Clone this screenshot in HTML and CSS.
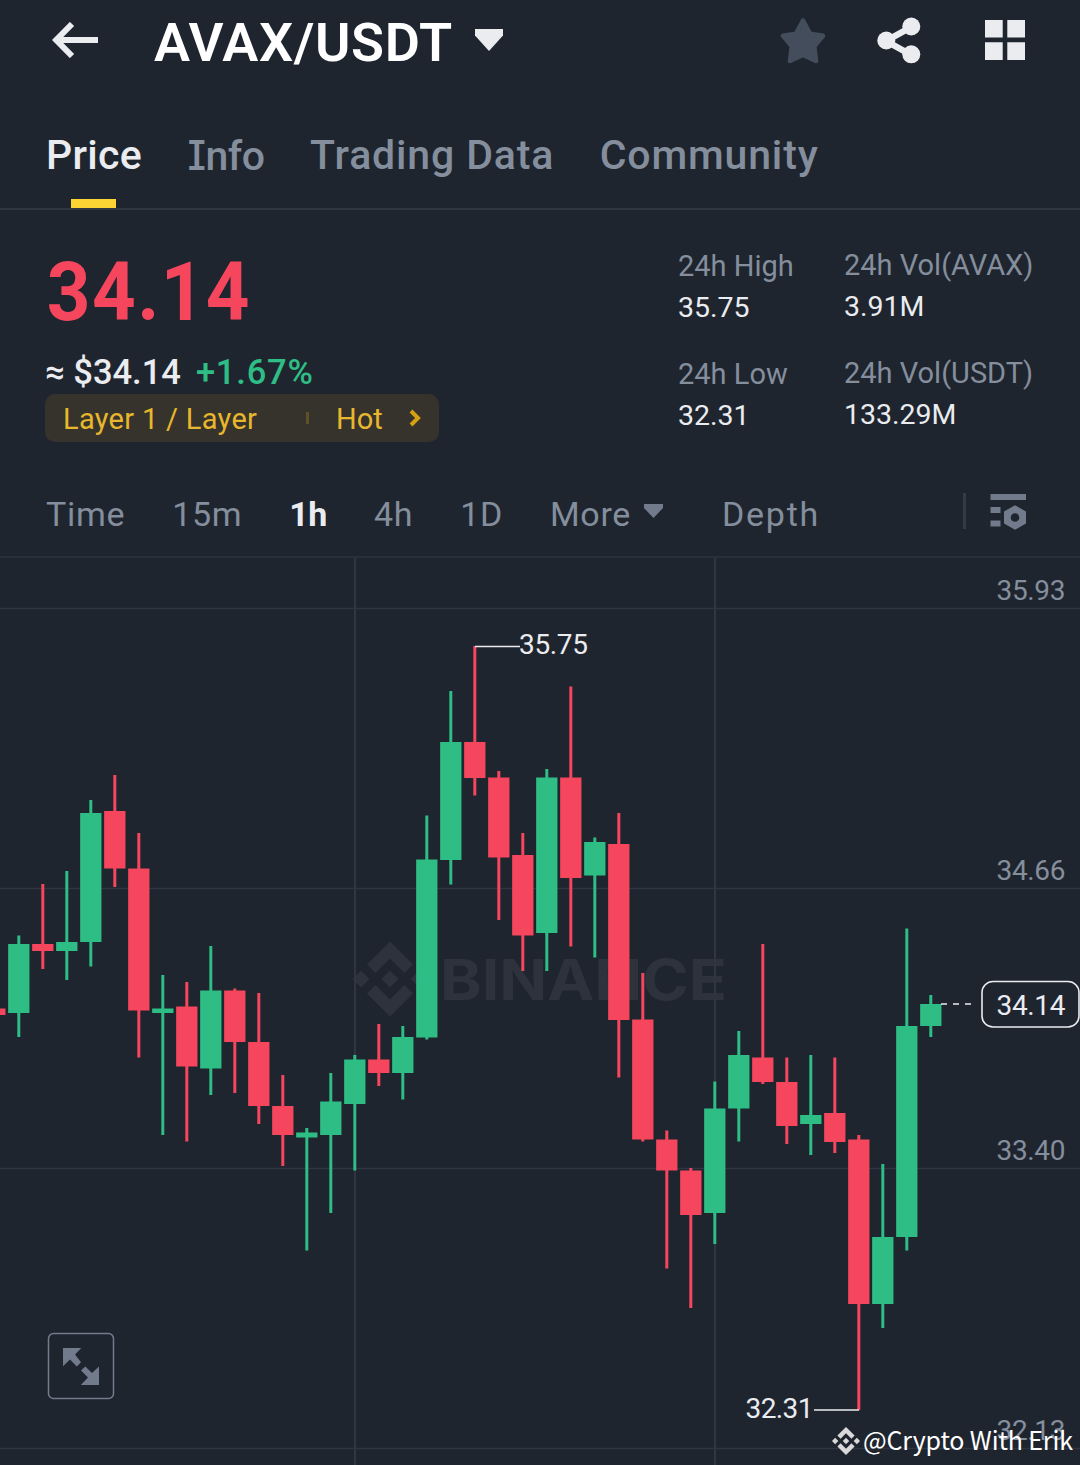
FILE: index.html
```html
<!DOCTYPE html>
<html lang="en">
<head>
<meta charset="utf-8">
<title>AVAX/USDT</title>
<link rel="stylesheet" href="styles.css">
</head>
<body>
<svg class="defs" width="0" height="0">
  <symbol id="brand" viewBox="0 0 126.61 126.61">
    <path d="M38.73 53.2l24.59-24.58 24.6 24.6 14.3-14.31L63.32 0l-38.9 38.9zM0 63.31L14.3 49l14.31 14.31-14.31 14.3zM38.73 73.41L63.32 98l24.6-24.6 14.31 14.29-38.91 38.91-38.91-38.88zM98 63.31L112.3 49l14.31 14.3-14.31 14.32zM77.83 63.3L63.32 48.78 48.81 63.28 63.32 77.8z"/>
  </symbol>
</svg>
<div class="screen">
  <header class="header">
    <svg class="back" width="46" height="36" viewBox="0 0 46 36"><path d="M20 2L4.200 18L20 34M4.200 18H46" fill="none" stroke="#eaecef" stroke-width="6"/></svg>
    <h1 class="pair">AVAX/USDT</h1>
    <svg class="pair-caret" width="28" height="22" viewBox="0 0 28 22"><path d="M0 0H28V6.500L14 22L0 6.500Z" fill="#eaecef"/></svg>
    <div class="actions">
      <svg width="46" height="48" viewBox="0 0 46 48"><path d="M23 3.500L30.100 16.800L43 18.800L34.300 29.200L36 44L23 38L10 44L11.700 29.200L3 18.800L15.900 16.800Z" fill="#444d5b" stroke="#444d5b" stroke-width="4.500" stroke-linejoin="round"/></svg>
      <svg class="share" width="44" height="48" viewBox="0 0 44 48"><path d="M34.300 10L9 24L34.300 38" fill="none" stroke="#eaecef" stroke-width="6.500"/><g fill="#eaecef"><circle cx="9.300" cy="23.500" r="9"/><circle cx="34.300" cy="9.500" r="9"/><circle cx="34.300" cy="37.300" r="9"/></g></svg>
      <svg class="apps" width="40" height="40" viewBox="0 0 40 40"><path d="M0 0H17.700V17.500H0ZM22.300 0H40V17.500H22.300ZM0 22.300H17.700V40H0ZM22.300 22.300H40V40H22.300Z" fill="#eaecef"/></svg>
    </div>
  </header>

  <nav class="tabs">
    <a class="tab tab-active">Price</a>
    <a class="tab tab-info"><span class="serif-i">I</span>nfo</a>
    <a class="tab">Trading Data</a>
    <a class="tab">Community</a>
  </nav>

  <section class="summary">
    <div class="quote">
      <div class="last">34.14</div>
      <div class="fiat"><span class="approx">≈ $34.14</span><span class="change">+1.67%</span></div>
      <div class="tags">
        <span class="tag-name">Layer 1 / Layer</span><i class="tag-sep"></i><span class="tag-hot">Hot</span>
        <svg width="12" height="18" viewBox="0 0 12 18"><path d="M2 2L9 9L2 16" fill="none" stroke="#d6a012" stroke-width="4"/></svg>
      </div>
    </div>
    <dl class="stats stats-range">
      <div class="stat"><dt>24h High</dt><dd>35.75</dd></div>
      <div class="stat"><dt>24h Low</dt><dd>32.31</dd></div>
    </dl>
    <dl class="stats stats-volume">
      <div class="stat"><dt>24h Vol(AVAX)</dt><dd>3.91M</dd></div>
      <div class="stat"><dt>24h Vol(USDT)</dt><dd>133.29M</dd></div>
    </dl>
  </section>

  <nav class="intervals">
    <a>Time</a><a>15m</a><a class="interval-active">1h</a><a>4h</a><a>1D</a>
    <a class="more">More<svg width="19" height="14" viewBox="0 0 19 14"><path d="M0 0H19V4L9.500 14L0 4Z" fill="#717b8c"/></svg></a>
    <a class="depth">Depth</a>
    <i class="rule"></i>
    <svg class="settings" width="36" height="37" viewBox="0 0 36 37"><g fill="#717b8c"><path d="M0.500 1H36V7H0.500ZM0.500 14H10.500V20H0.500ZM0.500 27.500H10.500V33.500H0.500Z"/><path fill-rule="evenodd" d="M25 12.300L36 18.500V30.500L25 36.700L14 30.500V18.500ZM25 20.200A4.300 4.300 0 1 0 25 28.800A4.300 4.300 0 1 0 25 20.200Z"/></g></svg>
  </nav>

  <main class="chart">
    <svg width="1080" height="907" viewBox="0 558 1080 907">
      <g class="watermark">
        <use href="#brand" x="352.500" y="941.500" width="75" height="75"/>
        <text x="440" y="999.500" textLength="287" lengthAdjust="spacingAndGlyphs">BINANCE</text>
      </g>
      <path class="grid" d="M0 608.500H1080M0 888.500H1080M0 1168.500H1080M0 1448.500H1080"/>
      <path class="grid grid-time" d="M355 558V1465M715 558V1465"/>
      <path class="up wick" d="M18.800 935.500V1037M66.800 871V980M90.800 800V966.500M162.800 975V1135M210.800 946V1095M306.800 1128V1250.500M330.800 1073V1213M354.800 1055V1170.500M402.800 1026V1099.500M426.800 815.500V1039.500M450.800 691V884.500M546.800 769V971M594.800 837.500V957.500M714.800 1081.500V1244M738.800 1031V1141.500M810.800 1055V1155M882.800 1164V1328M906.800 928.500V1250.500M930.800 995V1037"/>
      <path class="down wick" d="M42.800 884V969M114.800 775V887M138.800 833V1057.500M186.800 982V1141.500M234.800 988.500V1093M258.800 993V1124M282.800 1075V1166M378.800 1024V1086M474.800 646V795.500M498.800 771V920M522.800 833V971M570.800 686.500V946.500M618.800 813V1077.500M642.800 973V1141.500M666.800 1130.500V1268.500M690.800 1168V1308M762.800 944V1084M786.800 1057.500V1144M834.800 1057.500V1153M858.800 1135V1410"/>
      <path class="up body" d="M18.800 944V1013M66.800 942V951M90.800 813V942M162.800 1008.500V1013M210.800 990.500V1068.500M306.800 1132.500V1137.500M330.800 1101.500V1135M354.800 1059.500V1104M402.800 1037V1073M426.800 859.500V1037.500M450.800 742V860M546.800 777.500V933M594.800 842V875.500M714.800 1108.500V1213M738.800 1055V1108.500M810.800 1115V1124M882.800 1237V1304M906.800 1026V1237M930.800 1004V1026"/>
      <path class="down body" d="M-5.200 1008.500V1015M42.800 944V951M114.800 811V868.500M138.800 868.500V1010.500M186.800 1006.500V1066.500M234.800 990.500V1042M258.800 1042V1106M282.800 1106V1135M378.800 1059.500V1073M474.800 742V778M498.800 777.500V857.500M522.800 855V935.500M570.800 777.500V878M618.800 844V1020M642.800 1019.500V1139.500M666.800 1139.500V1170.500M690.800 1170.500V1215M762.800 1057.500V1082M786.800 1082V1126M834.800 1113V1142M858.800 1139.500V1304"/>
      <g class="axis">
        <text x="996.500" y="600" textLength="69">35.93</text>
        <text x="996.500" y="880" textLength="69">34.66</text>
        <text x="996.500" y="1160" textLength="69">33.40</text>
        <text x="996.500" y="1440" textLength="69">32.13</text>
      </g>
      <g class="marks">
        <path class="leader" d="M475 646.500H520M814 1410H859"/>
        <path class="leader leader-dash" d="M941 1004H972"/>
        <rect class="leader" x="982" y="981.500" width="97" height="45.500" rx="11"/>
        <text x="519" y="654" textLength="69">35.75</text>
        <text x="745.500" y="1418" textLength="68">32.31</text>
        <text x="996.500" y="1015" textLength="69">34.14</text>
      </g>
      <g class="expand">
        <rect x="48.500" y="1333.500" width="65" height="65" rx="5"/>
        <path d="M63 1348H81.300L75 1354.500L81 1362.300L76.800 1366.500L70 1359.500L63 1366.300ZM99 1385H80.800L88 1377.500L81 1370.500L85.300 1366.500L92 1373L99 1366.500Z"/>
      </g>
      <g class="credit">
        <use href="#brand" x="832" y="1427" width="28" height="28"/>
        <text x="863" y="1450" textLength="210">@Crypto With Erik</text>
      </g>
    </svg>
  </main>
</div>
</body>
</html>
```
FILE: styles.css
```css
* { box-sizing: border-box; }

body {
  margin: 0;
  background: #1f252f;
  color: #eaecef;
  font-family: Roboto, "Noto Sans", sans-serif;
}

h1, dl, dt, dd { margin: 0; font-weight: 400; }
svg { display: block; flex: none; }
.defs { position: absolute; }

.screen {
  width: 1080px;
  height: 1465px;
  display: flex;
  flex-direction: column;
  overflow: hidden;
}

.header {
  height: 85px;
  display: flex;
  align-items: center;
  padding: 0 55px 0 52px;
}
.back { margin-bottom: 5px; }
.pair {
  margin-left: 56px;
  font-size: 54px;
  font-weight: 600;
  line-height: 85px;
  letter-spacing: 0.65px;
  color: #fff;
  white-space: nowrap;
}
.pair-caret { margin: 0 0 5px 22px; }
.actions {
  margin: 0 0 4px auto;
  display: flex;
  align-items: center;
}
.share { margin-left: 51px; }
.apps { margin: 0 0 2px 64px; }

.tabs {
  height: 125px;
  padding: 24px 0 0 46px;
  display: flex;
  gap: 45.500px;
  border-bottom: 2px solid #2f3641;
}
.tab {
  height: 99px;
  font-size: 41px;
  font-weight: 500;
  line-height: 92px;
  letter-spacing: 0.85px;
  color: #848e9c;
  white-space: nowrap;
}
.tab-info { letter-spacing: -0.5px; }
.tab-active {
  display: flex;
  flex-direction: column;
  align-items: center;
  letter-spacing: 0.3px;
  color: #eaecef;
}
.tab-active::after {
  content: "";
  width: 45px;
  height: 9px;
  margin-top: -2px;
  background: #fcd535;
}
.serif-i {
  font-family: Inter, sans-serif;
  font-feature-settings: "cv08";
}

.summary {
  height: 258px;
  display: flex;
  padding-left: 45px;
}
.quote { width: 633px; }
.last {
  height: 136px;
  padding: 28px 0 0 2px;
  font-size: 82px;
  font-weight: 700;
  line-height: 108px;
  letter-spacing: 1.5px;
  color: #f6465d;
  transform: scaleX(0.93);
  transform-origin: 0 0;
}
.fiat {
  height: 48px;
  display: flex;
  gap: 15px;
  font-size: 34.500px;
  font-weight: 500;
  line-height: 52px;
  white-space: nowrap;
}
.change { color: #2ebd85; letter-spacing: 0.8px; }
.tags {
  width: 394px;
  height: 48px;
  display: flex;
  align-items: center;
  padding: 0 18px;
  border-radius: 10px;
  background: #35332c;
  color: #e8b72e;
  font-size: 29px;
  line-height: 36px;
  white-space: nowrap;
}
.tag-name { width: 243px; padding-top: 2px; letter-spacing: 0.3px; }
.tag-sep { width: 3px; height: 12px; background: #5e5028; }
.tag-hot { width: 91px; padding: 2px 0 0 27px; margin-right: 9px; }

.stats { font-size: 29px; white-space: nowrap; }
.stats-range { width: 166px; padding-top: 35px; }
.stats-volume { padding-top: 34px; }
.stat { height: 108px; }
.stat dt { height: 42px; line-height: 42px; color: #848e9c; }
.stat dd { height: 42px; line-height: 42px; font-size: 28.500px; }

.intervals {
  height: 90px;
  display: flex;
  align-items: center;
  padding: 3px 54px 0 46px;
  border-bottom: 2px solid #2a303b;
  font-size: 34px;
  letter-spacing: 0.7px;
  color: #848e9c;
  gap: 47px;
}
.interval-active { font-weight: 700; letter-spacing: -0.5px; color: #eaecef; }
.more { display: flex; align-items: center; gap: 13px; }
.more svg { margin-bottom: 6px; }
.depth { margin-left: 12px; letter-spacing: 1.700px; }
.rule { width: 3px; height: 36px; margin: 0 0 6px auto; background: #343b47; }
.settings { margin: 0 0 4px -23px; }

.watermark { fill: #2e323d; font: 700 56px Inter, sans-serif; }
.grid { fill: none; stroke: #2f3642; stroke-width: 1.500; }
.grid-time { stroke-width: 2; }
.up { stroke: #2ebd85; }
.down { stroke: #f6465d; }
.wick { stroke-width: 3; }
.body { stroke-width: 21.300; }
.axis { fill: #848e9c; font-size: 28px; }
.marks { fill: #eaecef; font-size: 28px; }
.leader { fill: none; stroke: #eaecef; stroke-width: 1.600; }
.leader-dash { stroke-dasharray: 6 6; }
.expand rect { fill: none; stroke: #717b8c; stroke-width: 1.500; }
.expand path { fill: #717b8c; }
.credit { fill: #fff; font: 400 25px "Noto Sans CJK SC", sans-serif; }
.credit use { fill: #d9d9d9; }
```
